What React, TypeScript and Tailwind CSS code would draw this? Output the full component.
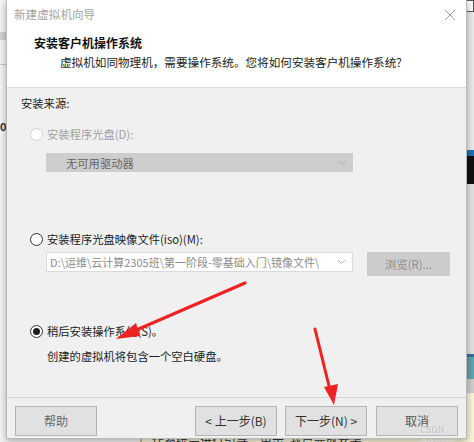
import React from 'react';

const font = { fontFamily: '"Noto Sans CJK SC", "Noto Sans", sans-serif' };

const Radio: React.FC<{ checked?: boolean; disabled?: boolean }> = ({ checked, disabled }) => (
  <span
    className={`flex h-[13px] w-[13px] shrink-0 items-center justify-center rounded-full border bg-white ${
      disabled ? 'border-[#cfcfcf]' : 'border-[#333333]'
    }`}
  >
    {checked && <span className="h-[7px] w-[7px] rounded-full bg-[#1f1f1f]" />}
  </span>
);

const Chevron: React.FC<{ color?: string }> = ({ color = '#9a9a9a' }) => (
  <svg width="9" height="6" viewBox="0 0 9 6" fill="none" className="shrink-0">
    <path d="M1 1l3.5 3.5L8 1" stroke={color} strokeWidth="1" />
  </svg>
);

const FooterButton: React.FC<{ children: React.ReactNode; className?: string }> = ({ children, className }) => (
  <button
    className={`flex h-[30px] w-[82px] items-center justify-center border border-[#b4b4b4] bg-[#e1e1e1] text-[12px] ${className ?? 'text-[#333333]'}`}
  >
    {children}
  </button>
);

export default function App() {
  return (
    <div className="relative h-[442px] w-[474px] overflow-hidden bg-[#f7f7f7]" style={font}>
      {/* desktop behind the dialog */}
      <div className="absolute left-0 top-[32px] h-[8px] w-[8px] bg-[#d4d4d4]" />
      <div className="absolute left-0 top-[64px] h-px w-[8px] bg-[#c8c8c8]" />
      <div className="absolute left-0 top-[118px] text-[11px] font-bold text-[#333]">01</div>
      <div className="absolute right-0 top-0 flex h-[442px] w-[10px] flex-col">
        <div className="h-[12px] border border-[#555] bg-white" />
        <div className="h-[138px] bg-[#ececec]" />
        <div className="h-[6px] bg-[#1f6fb8]" />
        <div className="h-[28px] bg-[#111111]" />
        <div className="h-[170px] bg-[#e4e4e4]" />
        <div className="h-[3px] bg-[#3f6f9a]" />
        <div className="h-[22px] bg-[#5fa6b1]" />
        <div className="h-[14px] bg-[#cfcfcf]" />
        <div className="flex-1 bg-[#fbf6dc]" />
      </div>
      <div className="absolute left-[140px] top-[430px] h-[20px] w-[330px] border-l-2 border-[#c9b98a] bg-[#fbf6dc] pl-[10px] text-[12px] leading-[20px] text-[#333]">
        作系统会进行引导，单击"我已完成安装"
      </div>

      {/* dialog */}
      <div className="relative ml-[6px] flex w-[461px] flex-col border-x border-b border-[#b9b9b9] bg-white shadow-[0_2px_8px_rgba(0,0,0,0.35)]">
        <div className="flex h-[30px] items-center justify-between pl-[7px] pr-[10px]">
          <span className="text-[11.6px] text-[#a3a3a3]">新建虚拟机向导</span>
          <svg width="12" height="12" viewBox="0 0 12 12">
            <path d="M1 1l10 10M11 1L1 11" stroke="#9a9a9a" strokeWidth="1" />
          </svg>
        </div>

        <div className="h-[58px] border-b border-[#dadada] bg-white pt-[5px]">
          <div className="pl-[27px] text-[12px] font-bold leading-[16px] text-[#111]">安装客户机操作系统</div>
          <div className="mt-[3px] pl-[53px] text-[11.6px] leading-[16px] text-[#222]">
            虚拟机如同物理机，需要操作系统。您将如何安装客户机操作系统?
          </div>
        </div>

        <div className="h-[309px] bg-[#f0f0f0] pt-[7px] text-[11.3px] leading-[16px] text-[#222]">
          <div className="pl-[14px]">安装来源:</div>

          <div className="mt-[15px] flex items-center gap-[4px] pl-[23px] text-[#a0a0a0]">
            <Radio disabled />
            <span>安装程序光盘(D):</span>
          </div>
          <div className="ml-[39px] mt-[11px] flex h-[19px] w-[307px] items-center justify-between bg-[#cdcdcd] pl-[20px] pr-[6px] text-[#666]">
            <span>无可用驱动器</span>
            <Chevron color="#b0b0b0" />
          </div>

          <div className="mt-[59px] flex items-center gap-[4px] pl-[23px]">
            <Radio />
            <span>安装程序光盘映像文件(iso)(M):</span>
          </div>
          <div className="ml-[39px] mt-[5px] flex items-start gap-[14px]">
            <div className="flex h-[20px] w-[307px] items-center justify-between gap-[4px] border border-[#dadada] bg-white pl-[3px] pr-[6px] text-[11px] text-[#8c8c8c]">
              <span className="overflow-hidden whitespace-nowrap">D:\运维\云计算2305班\第一阶段-零基础入门\镜像文件\</span>
              <Chevron color="#b0b0b0" />
            </div>
            <div className="flex h-[24px] w-[83px] items-center justify-center bg-[#cccccc] text-[#8d8d8d]">
              浏览(R)...
            </div>
          </div>

          <div className="mt-[47px] flex items-center gap-[4px] pl-[23px]">
            <Radio checked />
            <span>稍后安装操作系统(S)。</span>
          </div>
          <div className="mt-[9px] pl-[40px]">创建的虚拟机将包含一个空白硬盘。</div>
        </div>

        <div className="flex h-[41px] items-start border-t border-[#d4d4d4] bg-[#f0f0f0] px-[8px] pt-[8px]">
          <FooterButton className="text-[#666]">帮助</FooterButton>
          <div className="ml-auto flex gap-[8px]">
            <FooterButton>&lt; 上一步(B)</FooterButton>
            <FooterButton>下一步(N) &gt;</FooterButton>
            <FooterButton className="ml-px text-[#555]">取消</FooterButton>
          </div>
        </div>
      </div>

      {/* annotations */}
      <svg className="pointer-events-none absolute left-0 top-0" width="474" height="442" viewBox="0 0 474 442">
        <path d="M245 283 L134 331" stroke="#ee2222" strokeWidth="3.2" strokeLinecap="round" />
        <path d="M116 339 L136 323 L140 336 Z" fill="#ee2222" />
        <path d="M315 329 L330 390" stroke="#ee2222" strokeWidth="3" strokeLinecap="round" />
        <path d="M334 405 L324 387 L338 384 Z" fill="#ee2222" />
      </svg>
      <div className="pointer-events-none absolute left-[420px] top-[423px] text-[9px] font-bold text-[#c8c8c8] [text-shadow:0_0_2px_#fff]">
        CSDN @lsgqq
      </div>
    </div>
  );
}
